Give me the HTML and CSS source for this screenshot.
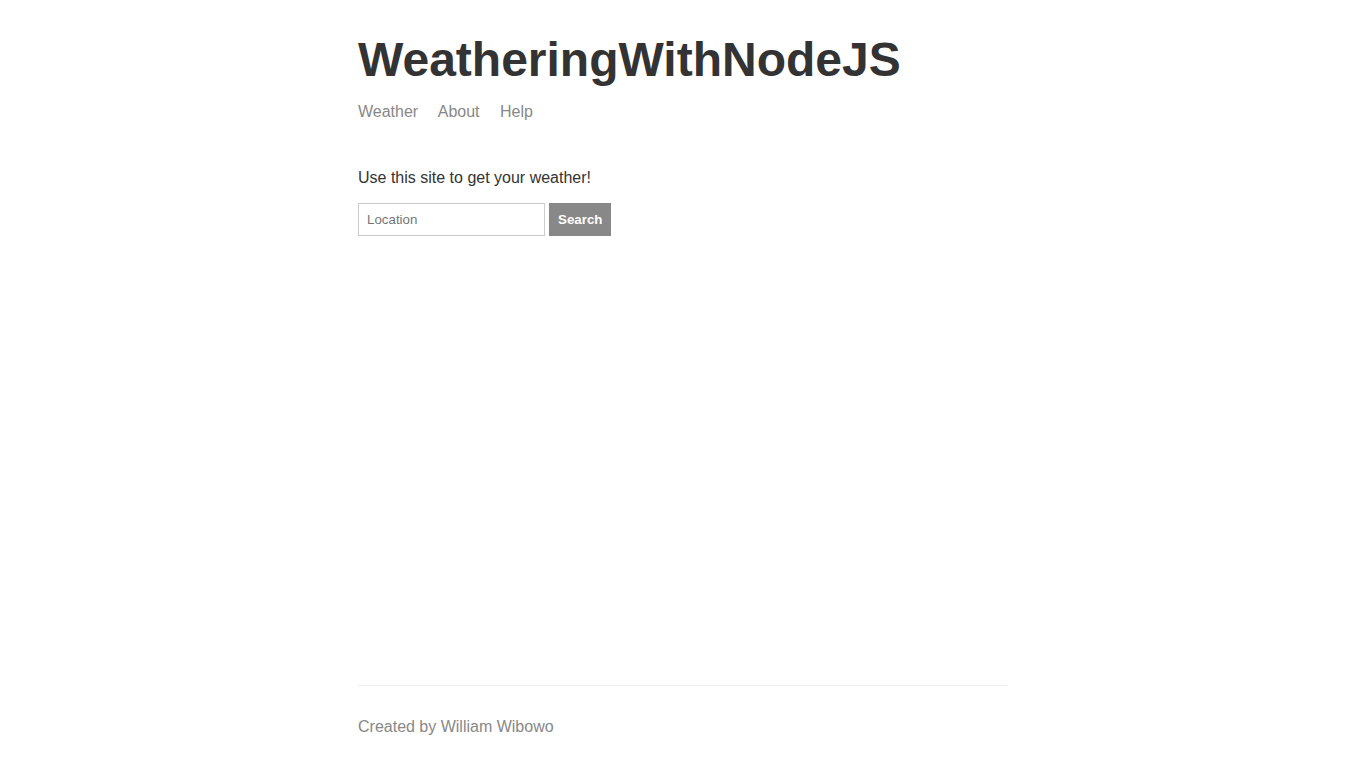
FILE: index.html
```html
<!DOCTYPE html>
<html lang="en">
<head>
    <meta charset="UTF-8">
    <meta name="viewport" content="width=device-width, initial-scale=1.0">
    <title>Weather</title>
    <link rel="stylesheet" href="styles.css">
</head>
<body>
    <div class="main-content">
        <!-- Header -->
        <header>
            <h1>WeatheringWithNodeJS</h1>
            <div>
                <a href="/">Weather</a>
                <a href="/about">About</a>
                <a href="/help">Help</a>
            </div>
        </header>

        <p>Use this site to get your weather!</p>

        <form>
            <input placeholder="Location">
            <button>Search</button>
        </form>

        <p id="message-1"></p>
        <p id="message-2"></p>
    </div>

    <footer>
        <p>Created by William Wibowo</p>
    </footer>
</body>
</html>
```

FILE: styles.css
```css
body {
    color: #333333;
    font-family: "Liberation Sans", Arial, sans-serif;
    font-size: 16px;
    max-width: 650px;
    margin: 0 auto;
    padding: 0 16px;
    display: flex;
    flex-direction: column;
    min-height: 100vh;
}

.main-content {
    flex-grow: 1;
}

header {
    margin-top: 16px;
    margin-bottom: 48px;
}

h1 {
    font-size: 48px;
    margin-top: 32px;
    margin-bottom: 16px;
}

header a {
    color: #888888;
    margin-right: 16px;
    text-decoration: none;
}

form {
    display: flex;
    gap: 4px;
}

input {
    border: 1px solid #cccccc;
    padding: 8px;
    width: 169px;
    font-family: "Liberation Sans", Arial, sans-serif;
    font-size: 13.33px;
    color: #333333;
}

input::placeholder {
    color: #757575;
}

button {
    cursor: pointer;
    border: 1px solid #888888;
    background: #888888;
    color: white;
    padding: 8px;
    font-family: "Liberation Sans", Arial, sans-serif;
    font-size: 13.33px;
    font-weight: bold;
}

footer {
    color: #888888;
    border-top: 1px solid #eeeeee;
    margin-top: 16px;
    padding: 16px 0;
}
```
